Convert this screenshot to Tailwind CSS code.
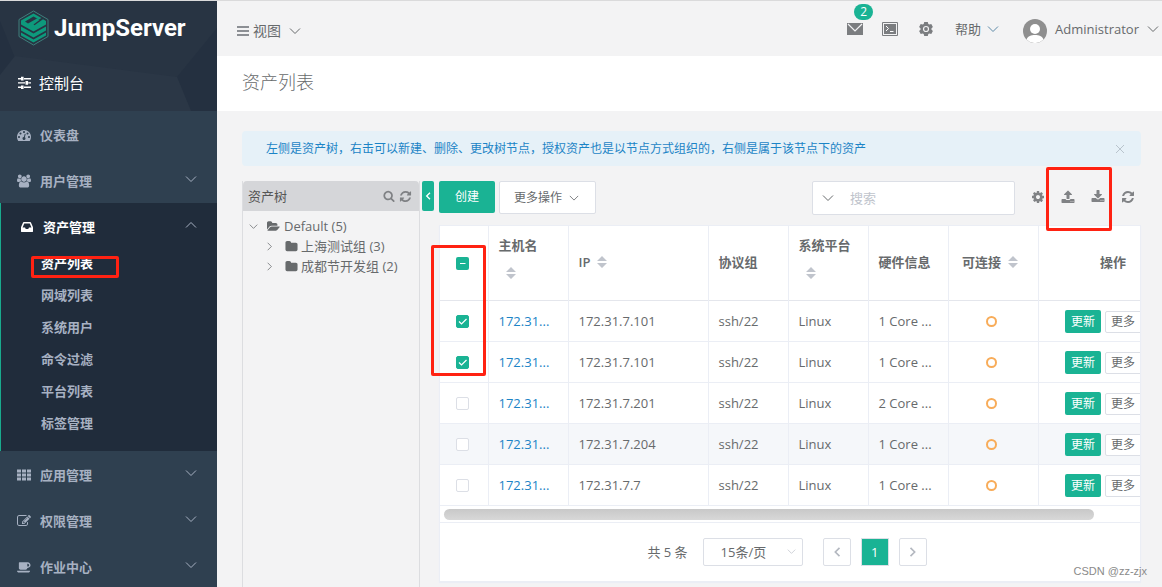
<!DOCTYPE html>
<html lang="zh-CN">
<head>
  <meta charset="UTF-8" />
  <meta name="viewport" content="width=device-width, initial-scale=1.0"/>
  <title>JumpServer - 资产列表</title>
  <script src="https://cdn.jsdelivr.net/npm/@tailwindcss/browser@4"></script>
</head>
<body class="bg-[#f3f3f4] font-['Open_Sans','Noto_Sans_CJK_SC',sans-serif] text-[13px] leading-5 text-[#676a6c]">

<!-- Icon sprite -->
<svg class="hidden">
  <symbol id="i-down" viewBox="0 0 12 12"><path d="M1 3.5l5 5 5-5" fill="none" stroke="currentColor"/></symbol>
  <symbol id="i-up" viewBox="0 0 12 12"><path d="M1 8.5l5-5 5 5" fill="none" stroke="currentColor"/></symbol>
  <symbol id="i-bars" viewBox="0 0 12 12"><path d="M0 1h12v2H0zM0 5h12v2H0zM0 9h12v2H0z"/></symbol>
  <symbol id="i-sliders" viewBox="0 0 14 14"><path d="M0 2h3v1.4H0zM6 2h7v1.4H6zM3 .8h2.6v3.6H3zM0 6.2h7v1.4H0zM10.300 6.2H13v1.4h-2.700zM7.500 5h2.600v3.800H7.500zM0 10.500h3v1.400H0zM6 10.500h7v1.400H6zM3 9.400h2.600v3.600H3z"/></symbol>
  <symbol id="i-th" viewBox="0 0 14 14"><path d="M0 1.500h4v3H0zM5 1.500h4v3H5zM10 1.500h4v3h-4zM0 5.500h4v3H0zM5 5.500h4v3H5zM10 5.500h4v3h-4zM0 9.500h4v3H0zM5 9.500h4v3H5zM10 9.500h4v3h-4z"/></symbol>
  <symbol id="i-dashboard" viewBox="0 0 1792 1792"><path d="M384 1152q0-53-37.5-90.5t-90.5-37.5-90.5 37.5-37.5 90.5 37.5 90.5 90.5 37.5 90.5-37.5 37.5-90.5zm192-448q0-53-37.5-90.5t-90.5-37.5-90.5 37.5-37.5 90.5 37.5 90.5 90.5 37.5 90.5-37.5 37.5-90.5zm428 481l101-382q6-26-7.5-48.5t-38.5-29.5-48 6.5-30 39.5l-101 382q-60 5-107 43.5t-63 98.5q-20 77 20 146t117 89 146-20 89-117q16-60-6-117t-72-91zm660-33q0-53-37.5-90.5t-90.5-37.5-90.5 37.5-37.5 90.5 37.5 90.5 90.5 37.5 90.5-37.5 37.5-90.5zm-640-640q0-53-37.5-90.5t-90.5-37.5-90.5 37.5-37.5 90.5 37.5 90.5 90.5 37.5 90.5-37.5 37.5-90.5zm448 192q0-53-37.5-90.5t-90.5-37.5-90.5 37.5-37.5 90.5 37.5 90.5 90.5 37.5 90.5-37.5 37.5-90.5zm320 448q0 261-141 483-19 29-54 29h-1402q-35 0-54-29-141-221-141-483 0-182 71-348t191-286 286-191 348-71 348 71 286 191 191 286 71 348z"/></symbol>
  <symbol id="i-users" viewBox="0 0 1920 1792"><path d="M593 896q-162 5-265 128h-134q-82 0-138-40.5t-56-118.5q0-353 124-353 6 0 43.5 21t97.5 42.5 119 21.500q67 0 133-23-5 37-5 66 0 139 81 256zm1071 637q0 120-73 189.5t-194 69.5h-874q-121 0-194-69.5t-73-189.5q0-53 3.5-103.5t14-109 26.5-108.5 43-97.5 62-81 85.5-53.5 111.5-20q10 0 43 21.5t73 48 107 48 135 21.5 135-21.5 107-48 73-48 43-21.5q61 0 111.5 20t85.5 53.5 62 81 43 97.5 26.5 108.5 14 109 3.5 103.5zm-1024-1277q0 106-75 181t-181 75-181-75-75-181 75-181 181-75 181 75 75 181zm704 384q0 159-112.5 271.5t-271.5 112.5-271.5-112.5-112.5-271.5 112.5-271.5 271.5-112.5 271.5 112.5 112.5 271.5zm576 225q0 78-56 118.5t-138 40.5h-134q-103-123-265-128 81-117 81-256 0-29-5-66 66 23 133 23 59 0 119-21.5t97.5-42.5 43.5-21q124 0 124 353zm-128-609q0 106-75 181t-181 75-181-75-75-181 75-181 181-75 181 75 75 181z"/></symbol>
  <symbol id="i-inbox" viewBox="0 0 1792 1792"><path d="M1151 960h316q-1-3-2.5-8t-2.5-8l-212-496h-708l-212 496q-1 2-2.5 8t-2.5 8h316l95 192h320zm513 30v482q0 26-19 45t-45 19h-1408q-26 0-45-19t-19-45v-482q0-62 25-123l238-552q10-25 36.5-42t52.5-17h832q26 0 52.5 17t36.5 42l238 552q25 61 25 123z"/></symbol>
  <symbol id="i-edit" viewBox="0 0 1792 1792"><path d="M888 1184l116-116-152-152-116 116v56h96v96h56zm440-720q-16-16-33 1l-350 350q-17 17-1 33t33-1l350-350q17-17 1-33zm80 594v190q0 119-84.5 203.5t-203.5 84.5h-832q-119 0-203.5-84.5t-84.5-203.5v-832q0-119 84.5-203.5t203.5-84.5h832q63 0 117 25 15 7 18 23 3 17-9 29l-49 49q-14 14-32 8-23-6-45-6h-832q-66 0-113 47t-47 113v832q0 66 47 113t113 47h832q66 0 113-47t47-113v-126q0-13 9-22l64-64q15-15 35-7t20 29zm-96-738l288 288-672 672h-288v-288zm444 132l-92 92-288-288 92-92q28-28 68-28t68 28l152 152q28 28 28 68t-28 68z"/></symbol>
  <symbol id="i-coffee" viewBox="0 0 1920 1792"><path d="M1664 640q0-80-56-136t-136-56h-64v384h64q80 0 136-56t56-136zm-1664 768h1792q0 106-75 181t-181 75h-1280q-106 0-181-75t-75-181zm1856-768q0 159-112.5 271.5t-271.5 112.5h-64v32q0 92-66 158t-158 66h-704q-92 0-158-66t-66-158v-736q0-26 19-45t45-19h1152q159 0 271.5 112.5t112.5 271.5z"/></symbol>
  <symbol id="i-search" viewBox="0 0 1792 1792"><path d="M1216 832q0-185-131.5-316.5t-316.5-131.5-316.5 131.5-131.5 316.5 131.5 316.5 316.5 131.5 316.5-131.5 131.5-316.5zm512 832q0 52-38 90t-90 38q-54 0-90-38l-343-342q-179 124-399 124-143 0-273.5-55.5t-225-150-150-225-55.5-273.5 55.5-273.5 150-225 225-150 273.5-55.5 273.5 55.5 225 150 150 225 55.5 273.5q0 220-124 399l343 343q37 37 37 90z"/></symbol>
  <symbol id="i-refresh" viewBox="0 0 1792 1792"><path d="M1639 1056q0 5-1 7-64 268-268 434.5t-478 166.5q-146 0-282.5-55t-243.5-157l-129 129q-19 19-45 19t-45-19-19-45v-448q0-26 19-45t45-19h448q26 0 45 19t19 45-19 45l-137 137q71 66 161 102t187 36q134 0 250-65t186-179q11-17 53-117 8-23 30-23h192q13 0 22.5 9.5t9.5 22.5zm25-800v448q0 26-19 45t-45 19h-448q-26 0-45-19t-19-45 19-45l138-138q-148-137-349-137-134 0-250 65t-186 179q-11 17-53 117-8 23-30 23h-199q-13 0-22.5-9.5t-9.5-22.5v-7q65-268 270-434.5t480-166.5q146 0 284 55.5t245 156.5l130-129q19-19 45-19t45 19 19 45z"/></symbol>
  <symbol id="i-cog" viewBox="0 0 1792 1792"><path d="M1152 896q0-106-75-181t-181-75-181 75-75 181 75 181 181 75 181-75 75-181zm512-109v222q0 12-8 23t-20 13l-185 28q-19 54-39 91 35 50 107 138 10 12 10 25t-9 23q-27 37-99 108t-94 71q-12 0-26-9l-138-108q-44 23-91 38-16 136-29 186-7 28-36 28h-222q-14 0-24.5-8.5t-11.5-21.5l-28-184q-49-16-90-37l-141 107q-10 9-25 9-14 0-25-11-126-114-165-168-7-10-7-23 0-12 8-23 15-21 51-66.5t54-70.5q-27-50-41-99l-183-27q-13-2-21-12.5t-8-23.5v-222q0-12 8-23t19-13l186-28q14-46 39-92-40-57-107-138-10-12-10-24 0-10 9-23 26-36 98.5-107.5t94.5-71.5q13 0 26 10l138 107q44-23 91-38 16-136 29-186 7-28 36-28h222q14 0 24.5 8.5t11.5 21.5l28 184q49 16 90 37l142-107q9-9 24-9 13 0 25 10 129 119 165 170 7 8 7 22 0 12-8 23-15 21-51 66.5t-54 70.5q26 50 41 98l183 28q13 2 21 12.5t8 23.5z"/></symbol>
  <symbol id="i-upload" viewBox="0 0 1792 1792"><path d="M1344 1472q0-26-19-45t-45-19-45 19-19 45 19 45 45 19 45-19 19-45zm256 0q0-26-19-45t-45-19-45 19-19 45 19 45 45 19 45-19 19-45zm128-224v320q0 40-28 68t-68 28h-1472q-40 0-68-28t-28-68v-320q0-40 28-68t68-28h427q21 56 70.5 92t110.5 36h256q61 0 110.5-36t70.5-92h427q40 0 68 28t28 68zm-325-648q-17 40-59 40h-256v448q0 26-19 45t-45 19h-256q-26 0-45-19t-19-45v-448h-256q-42 0-59-40-17-39 14-69l448-448q18-19 45-19t45 19l448 448q31 30 14 69z"/></symbol>
  <symbol id="i-download" viewBox="0 0 1792 1792"><path d="M1344 1344q0-26-19-45t-45-19-45 19-19 45 19 45 45 19 45-19 19-45zm256 0q0-26-19-45t-45-19-45 19-19 45 19 45 45 19 45-19 19-45zm128-224v320q0 40-28 68t-68 28h-1472q-40 0-68-28t-28-68v-320q0-40 28-68t68-28h465l135 136q58 56 136 56t136-56l136-136h464q40 0 68 28t28 68zm-325-569q17 41-14 70l-448 448q-18 19-45 19t-45-19l-448-448q-31-29-14-70 17-39 59-39h256v-448q0-26 19-45t45-19h256q26 0 45 19t19 45v448h256q42 0 59 39z"/></symbol>
  <symbol id="i-folder" viewBox="0 0 1792 1792"><path d="M1728 608v704q0 92-66 158t-158 66h-1216q-92 0-158-66t-66-158v-960q0-92 66-158t158-66h320q92 0 158 66t66 158v32h672q92 0 158 66t66 158z"/></symbol>
  <symbol id="i-folder-open" viewBox="0 0 1920 1792"><path d="M1879 952q0 31-31 66l-336 396q-43 51-120.5 86.5t-143.5 35.5h-1088q-34 0-60.5-13t-26.5-43q0-31 31-66l336-396q43-51 120.5-86.5t143.5-35.5h1088q34 0 60.5 13t26.5 43zm-343-344v160h-832q-94 0-197 47.5t-164 119.5l-337 396-5 6q0-4-.5-12.5t-.5-12.5v-960q0-92 66-158t158-66h320q92 0 158 66t66 158v32h544q92 0 158 66t66 158z"/></symbol>
  <symbol id="i-sort" viewBox="0 0 10 12"><path d="M0 5l5-5 5 5zM0 7l5 5 5-5z"/></symbol>
</svg>

<div class="relative flex h-screen overflow-hidden border-t border-[#dadadb]">

  <!-- Sidebar -->
  <aside class="w-[217px] shrink-0 bg-[#2f4050] font-semibold text-[#a7b1c2]">
    <div class="grid h-[110px]">
      <svg class="h-[110px] w-full [grid-area:1/1]" viewBox="0 0 217 110" preserveAspectRatio="none">
        <path fill="#283443" d="M0 0h217v110H0z"/>
        <path fill="#243040" d="M0 20l15 37L0 75zM217 27l-40 49 14 34h26z"/>
        <path fill="#2b3746" d="M15 55l162 21 14 34H0V74z"/>
      </svg>
      <div class="flex flex-col [grid-area:1/1]">
        <a href="#" class="flex h-[54px] items-center pl-[18px] text-white">
          <svg class="size-9" viewBox="0 0 36 36">
            <path d="M15.500 1L30 9.500v17L15.500 35 1 26.500v-17z" fill="none" stroke="#3e7f7c"/>
            <path fill="#0d9a7c" d="M3 10.500L15.500 3.500l8 4.500-2.500 1.500-5.500-3L7 11.500l3 2 9-5 2.500 1.500-6 4.500 1 .7 8.500-6 3 1.800v3.500l-12.500 7L3 14.500z"/>
            <path fill="#0d9a7c" d="M3 16.500l12.500 7 12.500-7v4l-12.500 7-12.500-7zM3 22.500l12.500 7 12.500-7v3l-12.500 7-12.500-7z"/>
          </svg>
          <span class="font-['Roboto',sans-serif] text-2xl leading-8 font-bold">JumpServer</span>
        </a>
        <a href="#" class="flex h-[56px] items-center gap-[7px] pl-[18px] text-[15px] font-normal text-white">
          <svg class="size-[14px] fill-current"><use href="#i-sliders"/></svg>控制台
        </a>
      </div>
    </div>
    <nav>
      <a href="#" class="flex h-[46px] items-center gap-[9px] px-[17px] pt-px"><svg class="size-[14px] fill-current"><use href="#i-dashboard"/></svg>仪表盘</a>
      <a href="#" class="flex h-[46px] items-center gap-[9px] pr-5 pl-[17px] pt-px"><svg class="size-[14px] fill-current"><use href="#i-users"/></svg><span class="grow">用户管理</span><svg class="mb-1 size-3"><use href="#i-down"/></svg></a>
      <div class="border-l border-[#19aa8d] bg-[#202c3b] pb-3">
        <a href="#" class="flex h-11 items-center gap-[9px] pr-5 pl-[19px] pt-1 text-white"><svg class="size-[14px] fill-current"><use href="#i-inbox"/></svg><span class="grow">资产管理</span><svg class="mb-1 size-3 text-[#a7b1c2]"><use href="#i-up"/></svg></a>
        <ul class="pl-10 leading-8">
          <li><a href="#" class="block text-white">资产列表</a></li>
          <li><a href="#" class="block">网域列表</a></li>
          <li><a href="#" class="block">系统用户</a></li>
          <li><a href="#" class="block">命令过滤</a></li>
          <li><a href="#" class="block">平台列表</a></li>
          <li><a href="#" class="block">标签管理</a></li>
        </ul>
      </div>
      <a href="#" class="flex h-[46px] items-center gap-[9px] pr-5 pl-[17px] pt-px"><svg class="size-[14px] fill-current"><use href="#i-th"/></svg><span class="grow">应用管理</span><svg class="mb-1 size-3"><use href="#i-down"/></svg></a>
      <a href="#" class="flex h-[46px] items-center gap-[9px] pr-5 pl-[17px] pt-px"><svg class="size-[14px] fill-current"><use href="#i-edit"/></svg><span class="grow">权限管理</span><svg class="mb-1 size-3"><use href="#i-down"/></svg></a>
      <a href="#" class="flex h-[46px] items-center gap-[9px] pr-5 pl-[17px] pt-px"><svg class="size-[14px] fill-current"><use href="#i-coffee"/></svg><span class="grow">作业中心</span><svg class="mb-1 size-3"><use href="#i-down"/></svg></a>
    </nav>
  </aside>

  <main class="flex min-w-0 grow flex-col">
    <!-- Top bar -->
    <header class="flex h-[55px] shrink-0 items-center pr-[3px] pl-5">
      <button class="flex items-center gap-1 pt-1 text-sm"><svg class="size-3 fill-[#8c8f94]"><use href="#i-bars"/></svg>视图<svg class="ml-1 size-3"><use href="#i-down"/></svg></button>
      <div class="ml-auto flex items-center">
        <button class="relative mr-[19px]" aria-label="消息">
          <svg class="h-3 w-4" viewBox="0 0 16 12"><path fill="#7b7d80" d="M0 0h16v12H0z"/><path d="M1 1l7 7 7-7" fill="none" stroke="#f3f3f4" stroke-width="1.200"/></svg>
          <span class="absolute -top-[19px] left-[7px] h-4 w-[19px] rounded-full bg-[#1ab394] text-center text-xs leading-4 text-white">2</span>
        </button>
        <button class="mr-5" aria-label="终端">
          <svg class="h-[14px] w-4" viewBox="0 0 16 14"><path fill="none" stroke="#7b7d80" d="M.5.5h15v13H.5z"/><path fill="#7b7d80" d="M2 2h12v10H2z"/><path d="M4 4l2.500 2.500L4 9M8 9.500h3.500" fill="none" stroke="#fff"/></svg>
        </button>
        <button class="mr-[21px]" aria-label="设置">
          <svg class="size-4" viewBox="0 0 16 16"><path d="M6.200 1h3.600l.5 2 1 .6 2-.6 1.600 3-1.500 1.400v1.200l1.500 1.400-1.600 3-2-.6-1 .6-.5 2H6.200l-.5-2-1-.6-2 .6-1.600-3 1.500-1.400V7.400L1.100 6l1.600-3 2 .6 1-.6z" fill="#7b7d80"/><circle cx="8" cy="8" r="2.500" fill="none" stroke="#f3f3f4" stroke-width="1.200"/></svg>
        </button>
        <button class="mr-6 flex items-center gap-[6px]">帮助<svg class="size-3 text-[#5d8aa8]"><use href="#i-down"/></svg></button>
        <button class="flex items-center">
          <svg class="mt-1 mr-2 size-6" viewBox="0 0 24 24"><circle cx="12" cy="12" r="12" fill="#8f8f8f"/><circle cx="12" cy="10" r="5" fill="#fff"/><path d="M3.500 20.500C5 17 8 16 12 16s7 1 8.500 4.500A12 12 0 0 1 3.500 20.500z" fill="#fff"/></svg>
          Administrator<svg class="ml-2 size-3"><use href="#i-down"/></svg>
        </button>
      </div>
    </header>

    <h1 class="flex h-[55px] shrink-0 items-center bg-white pb-1 pl-[25px] text-lg font-light">资产列表</h1>

    <div class="flex min-h-0 grow flex-col pt-5 pr-[21px] pl-[25px]">
      <div class="flex h-[35px] shrink-0 items-center justify-between rounded bg-[#e6f1f8] pr-4 pl-6 text-xs text-[#1c84c6]">
        左侧是资产树，右击可以新建、删除、更改树节点，授权资产也是以节点方式组织的，右侧是属于该节点下的资产
        <button aria-label="关闭"><svg class="size-[10px]" viewBox="0 0 10 10"><path d="M1 1l8 8M9 1L1 9" stroke="#b9c4cd"/></svg></button>
      </div>

      <div class="mt-[15px] flex min-h-0 grow">
        <!-- Node tree -->
        <section class="w-[178px] shrink-0 border-x border-[#dcdde0]">
          <div class="flex h-[30px] items-center gap-1 rounded-t bg-[#d5d6d9] pr-[7px] pl-[5px] text-[#555]">
            <span class="grow">资产树</span>
            <button aria-label="搜索节点"><svg class="size-3 fill-[#7f8184]"><use href="#i-search"/></svg></button>
            <button aria-label="刷新节点"><svg class="size-[13px] fill-[#7f8184]"><use href="#i-refresh"/></svg></button>
          </div>
          <ul class="pt-[5px] pl-[6px]">
            <li class="flex items-center"><svg class="mr-[9px] size-[9px]"><use href="#i-down"/></svg><svg class="mr-1 size-[13px] fill-current"><use href="#i-folder-open"/></svg>Default (5)</li>
            <li class="flex items-center pl-4"><svg class="mr-[11px] size-[9px] -rotate-90"><use href="#i-down"/></svg><svg class="mr-[3px] size-[13px] fill-current"><use href="#i-folder"/></svg>上海测试组 (3)</li>
            <li class="flex items-center pl-4"><svg class="mr-[11px] size-[9px] -rotate-90"><use href="#i-down"/></svg><svg class="mr-[3px] size-[13px] fill-current"><use href="#i-folder"/></svg>成都节开发组 (2)</li>
          </ul>
        </section>
        <button class="ml-[2px] grid h-[30px] w-3 shrink-0 place-items-center rounded-xs bg-[#1ab394] text-white" aria-label="收起"><svg class="size-2 rotate-90" viewBox="0 0 12 12"><path d="M1 3l5 5 5-5" fill="none" stroke="currentColor" stroke-width="2"/></svg></button>

        <section class="ml-[5px] flex min-w-0 grow flex-col">
          <!-- Toolbar -->
          <div class="flex items-start">
            <button class="h-8 rounded-xs bg-[#1ab394] px-4 text-xs text-white">创建</button>
            <button class="ml-1 flex h-[33px] items-center gap-[7px] rounded-xs border border-[#dcdfe6] bg-white pr-4 pl-[14px] text-xs">更多操作<svg class="size-[10px]"><use href="#i-down"/></svg></button>
            <div class="ml-auto flex h-[34px] w-[203px] items-center rounded-xs border border-[#dcdfe6] bg-white pl-[9px]">
              <svg class="size-3 shrink-0"><use href="#i-down"/></svg>
              <input type="text" placeholder="搜索" aria-label="搜索" class="ml-4 min-w-0 grow outline-none placeholder:text-[#c0c4cc]">
            </div>
            <div class="ml-4 flex h-8 items-center gap-4 pr-[6px]">
              <button aria-label="列设置"><svg class="size-[14px] fill-[#808285]"><use href="#i-cog"/></svg></button>
              <button aria-label="导入"><svg class="size-[14px] fill-[#808285]"><use href="#i-upload"/></svg></button>
              <button aria-label="导出"><svg class="size-[14px] fill-[#808285]"><use href="#i-download"/></svg></button>
              <button aria-label="刷新"><svg class="size-[14px] fill-[#808285]"><use href="#i-refresh"/></svg></button>
            </div>
          </div>

          <!-- Asset table -->
          <div class="mt-[10px] border border-[#ebeef5] bg-white shadow-[0_1px_1px_#ebeef5]">
            <div class="overflow-hidden">
              <table class="w-[748px] min-w-full table-fixed border-collapse text-left">
                <colgroup>
                  <col class="w-12"><col class="w-20"><col class="w-[140px]"><col class="w-20"><col class="w-20"><col class="w-20"><col class="w-[90px]"><col class="w-[150px]">
                </colgroup>
                <thead>
                  <tr class="h-[74px] border-b border-[#e4e6ec] [&>th]:border-r [&>th]:border-[#ebeef5] [&>th]:font-semibold">
                    <th class="pt-[2px] pl-[15px]"><label class="grid size-[14px] place-items-center"><input type="checkbox" id="checkAll" aria-label="全选" class="size-[13px] appearance-none rounded-xs bg-[#1ab394] [grid-area:1/1]"><svg class="pointer-events-none size-[13px] [grid-area:1/1]" viewBox="0 0 13 13"><path d="M4 6.500h5.500" stroke="#fff"/></svg></label></th>
                    <th class="px-[10px] pt-[9px] align-top">主机名<svg class="mt-3 ml-[7px] h-3 w-[10px] fill-[#c0c4cc]"><use href="#i-sort"/></svg></th>
                    <th class="px-[10px] pb-[2px]"><span class="flex items-center gap-[7px]">IP<svg class="h-3 w-[10px] fill-[#c0c4cc]"><use href="#i-sort"/></svg></span></th>
                    <th class="px-[10px] pb-[2px]">协议组</th>
                    <th class="px-[10px] pt-[9px] align-top">系统平台<svg class="mt-3 ml-[7px] h-3 w-[10px] fill-[#c0c4cc]"><use href="#i-sort"/></svg></th>
                    <th class="px-[10px] pb-[2px]">硬件信息</th>
                    <th class="pr-[6px] pb-[2px]"><span class="flex items-center justify-center gap-[7px]">可连接<svg class="h-3 w-[10px] fill-[#c0c4cc]"><use href="#i-sort"/></svg></span></th>
                    <th class="pb-[2px] text-center">操作</th>
                  </tr>
                </thead>
                <tbody id="assetTable"></tbody>
              </table>
            </div>
            <div class="border-b border-[#ebeef5] px-1 pt-[3px] pb-[2px]">
              <div class="h-[11px] w-[94%] rounded-full bg-linear-to-b from-[#c8c8c8] to-[#d8d8d8]"></div>
            </div>
            <!-- Pagination -->
            <div class="flex h-[58px] items-center justify-center pr-[6px]">
              <span>共 5 条</span>
              <div class="ml-[15px] grid items-center">
                <select aria-label="每页条数" class="h-7 w-[100px] appearance-none rounded-xs border border-[#dcdfe6] pl-[17px] [grid-area:1/1]"><option>15条/页</option></select>
                <svg class="pointer-events-none mr-[7px] size-[9px] justify-self-end text-[#c0c4cc] [grid-area:1/1]"><use href="#i-down"/></svg>
              </div>
              <button class="ml-5 grid size-7 place-items-center rounded-xs border border-[#dcdfe6] text-[#b4b8c0]" aria-label="上一页"><svg class="size-[10px] rotate-90" viewBox="0 0 12 12"><path d="M1 3l5 5 5-5" fill="none" stroke="currentColor" stroke-width="2"/></svg></button>
              <button class="ml-[10px] size-7 border border-[#dcdfe6] bg-[#1ab394] text-white">1</button>
              <button class="ml-[10px] grid size-7 place-items-center rounded-xs border border-[#dcdfe6] text-[#b4b8c0]" aria-label="下一页"><svg class="size-[10px] -rotate-90" viewBox="0 0 12 12"><path d="M1 3l5 5 5-5" fill="none" stroke="currentColor" stroke-width="2"/></svg></button>
            </div>
          </div>
        </section>
      </div>
    </div>
  </main>

  <!-- Annotations -->
  <div class="pointer-events-none absolute top-[255px] left-[31px] h-[22px] w-[88px] rounded-xs border-3 border-[#ff2212]"></div>
  <div class="pointer-events-none absolute top-[244px] left-[431px] h-[131px] w-[55px] rounded-xs border-3 border-[#ff2212]"></div>
  <div class="pointer-events-none absolute top-[166px] right-[50px] h-[64px] w-[66px] rounded-xs border-3 border-[#ff2212]"></div>
  <span class="absolute right-[15px] bottom-2 font-['Liberation_Sans',sans-serif] text-[11px] leading-4 text-[#8a8a8a]">CSDN @zz-zjx</span>
</div>

<script>
const assets = [
  { ip: '172.31.7.101', cores: 1, checked: true },
  { ip: '172.31.7.101', cores: 1, checked: true },
  { ip: '172.31.7.201', cores: 2, checked: false },
  { ip: '172.31.7.204', cores: 1, checked: false, hover: true },
  { ip: '172.31.7.7', cores: 1, checked: false }
];

document.getElementById('checkAll').indeterminate = true;

document.getElementById('assetTable').innerHTML = assets.map(a => `
  <tr class="h-[41px] border-b border-[#ebeef5] [&>td]:border-r [&>td]:border-[#ebeef5] ${a.hover ? 'bg-[#f5f7fa]' : ''}">
    <td class="pt-[2px] pl-[15px]"><label class="grid size-[14px] place-items-center"><input type="checkbox" aria-label="${a.ip}" ${a.checked ? 'checked' : ''} class="size-[13px] appearance-none rounded-xs border border-[#dcdfe6] bg-white checked:border-[#1ab394] checked:bg-[#1ab394] [grid-area:1/1]"><svg class="pointer-events-none size-[13px] [grid-area:1/1]" viewBox="0 0 13 13"><path d="M3 6.500l2.500 2.500 5-5" fill="none" stroke="#fff" stroke-width="1.200"/></svg></label></td>
    <td class="px-[10px]"><a href="#" class="text-[#1c84c6]">172.31...</a></td>
    <td class="px-[10px]">${a.ip}</td>
    <td class="px-[10px]">ssh/22</td>
    <td class="px-[10px]">Linux</td>
    <td class="px-[10px] whitespace-nowrap">${a.cores} Core ...</td>
    <td class="pt-[2px] pr-1"><span class="mx-auto block size-[11px] rounded-full border-2 border-[#f8ac59]"></span></td>
    <td class="pt-[2px]"><div class="flex items-center justify-center gap-1 text-xs"><button class="h-[23px] rounded-xs bg-[#1ab394] px-[6px] text-white">更新</button><button class="h-[22px] w-14 shrink-0 rounded-xs border border-[#dcdfe6] bg-white pl-[5px] text-left">更多</button></div></td>
  </tr>`).join('');
</script>
</body>
</html>
